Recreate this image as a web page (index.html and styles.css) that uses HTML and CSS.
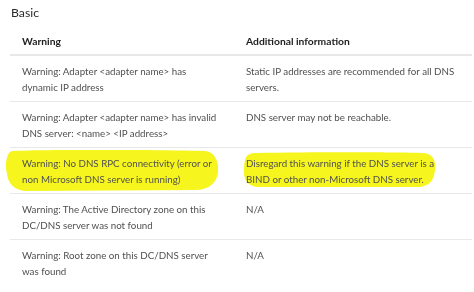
FILE: index.html
```html
<!DOCTYPE html>
<html>
<head>
<meta charset="utf-8">
<link rel="stylesheet" href="styles.css">
</head>
<body>
<div class="page">
  <div class="title">Basic</div>
  <table class="grid">
    <colgroup><col class="c1"><col class="c2"></colgroup>
    <thead>
      <tr><th>Warning</th><th>Additional information</th></tr>
    </thead>
    <tbody>
      <tr>
        <td>Warning: Adapter &lt;adapter name&gt; has dynamic IP address</td>
        <td>Static IP addresses are recommended for all DNS servers.</td>
      </tr>
      <tr>
        <td>Warning: Adapter &lt;adapter name&gt; has invalid DNS server: &lt;name&gt; &lt;IP address&gt;</td>
        <td>DNS server may not be reachable.</td>
      </tr>
      <tr>
        <td class="hl">
          <svg class="blob blob-left" viewBox="0 0 213 41" preserveAspectRatio="none"><path d="M8,1 C60,-1 160,0 200,1 C210,2 214,12 213,22 C212,32 205,40 190,40 L20,41 C8,40 3,32 2,24 C0,17 1,9 3,5 C4,2 6,1 8,1 Z"/></svg>
          <span class="txt">Warning: No DNS RPC connectivity (error or non Microsoft DNS server is running)</span>
        </td>
        <td class="hl">
          <svg class="blob blob-right" viewBox="0 0 192 35" preserveAspectRatio="none"><path d="M14,1 C60,0 150,0 180,1 C190,2 192,10 191,18 C190,28 186,34 175,35 L14,35 C5,34 1,30 0,22 C0,14 0,6 4,3 C7,1 10,1 14,1 Z"/></svg>
          <span class="txt">Disregard this warning if the DNS server is a BIND or other non-Microsoft DNS server.</span>
        </td>
      </tr>
      <tr>
        <td>Warning: The Active Directory zone on this DC/DNS server was not found</td>
        <td>N/A</td>
      </tr>
      <tr>
        <td>Warning: Root zone on this DC/DNS server was found</td>
        <td>N/A</td>
      </tr>
    </tbody>
  </table>
</div>
</body>
</html>
```
FILE: styles.css
```css
html, body { margin: 0; padding: 0; background: #fff; }
body {
  font-family: "Lato", "Roboto", sans-serif;
  color: #505050;
}
.page { padding: 0 2px 0 10px; }
.title {
  font-size: 12.25px;
  line-height: 18px;
  margin: 4px 0 6px 1px;
  color: #2b2b2b;
}
.grid {
  width: 462px;
  border-collapse: collapse;
  table-layout: fixed;
  font-size: 9.75px;
}
.c1 { width: 224px; }
.grid th {
  text-align: left;
  font-weight: 700;
  font-size: 10.3px;
  color: #1e1e1e;
  line-height: 16px;
  height: 16px;
  padding: 5px 12px 5px 12px;
  border-bottom: 2px solid #e8e8e8;
}
.grid td {
  vertical-align: top;
  line-height: 16px;
  height: 32px;
  padding: 7px 12px 6px 12px;
  border-bottom: 1px solid #e8e8e8;
}
.grid td + td { padding-right: 14px; }
.grid tbody tr:last-child td { border-bottom: none; }
.hl { position: relative; }
.txt { position: relative; }
.blob {
  position: absolute;
  fill: #f6f61e;
  mix-blend-mode: multiply;
}
.blob-left { left: -5px; top: 2px; width: 213px; height: 41px; }
.blob-right { left: 10px; top: 4px; width: 192px; height: 35px; }
```
